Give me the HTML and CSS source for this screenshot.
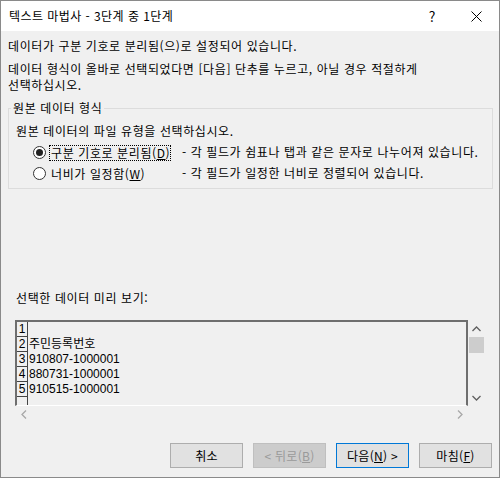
FILE: index.html
```html
<!DOCTYPE html>
<html lang="ko">
<head>
<meta charset="utf-8">
<title>텍스트 마법사</title>
<link rel="stylesheet" href="styles.css">
</head>
<body>
<div class="window">
  <div class="titlebar">
    <span class="title">텍스트 마법사 - 3단계 중 1단계</span>
    <span class="help">?</span>
    <svg class="close" width="11" height="11" viewBox="0 0 11 11"><path d="M0.5 0.5 L10.5 10.5 M10.5 0.5 L0.5 10.5" stroke="#000" stroke-width="1" fill="none"/></svg>
  </div>
  <div class="body">
    <p class="msg m1">데이터가 구분 기호로 분리됨(으)로 설정되어 있습니다.</p>
    <p class="msg m2">데이터 형식이 올바로 선택되었다면 [다음] 단추를 누르고, 아닐 경우 적절하게<br>선택하십시오.</p>
    <fieldset class="group">
      <legend>원본 데이터 형식</legend>
      <p class="msg">원본 데이터의 파일 유형을 선택하십시오.</p>
      <div class="opt">
        <span class="radio checked"></span>
        <span class="lblwrap"><span class="lbl focus">구분 기호로 분리됨(<u>D</u>)</span></span>
        <span class="desc">- 각 필드가 쉼표나 탭과 같은 문자로 나누어져 있습니다.</span>
      </div>
      <div class="opt">
        <span class="radio"></span>
        <span class="lblwrap"><span class="lbl">너비가 일정함(<u>W</u>)</span></span>
        <span class="desc">- 각 필드가 일정한 너비로 정렬되어 있습니다.</span>
      </div>
    </fieldset>
    <p class="msg preview-label">선택한 데이터 미리 보기:</p>
    <div class="preview">
      <div class="data">
        <div class="row"><span class="num">1</span><span class="cell"></span></div>
        <div class="row"><span class="num">2</span><span class="cell">주민등록번호</span></div>
        <div class="row"><span class="num">3</span><span class="cell">910807-1000001</span></div>
        <div class="row"><span class="num">4</span><span class="cell">880731-1000001</span></div>
        <div class="row"><span class="num">5</span><span class="cell">910515-1000001</span></div>
        <div class="row"><span class="num"></span><span class="cell"></span></div>
      </div>
      <div class="vscroll">
        <span class="arrow"><svg width="9" height="6" viewBox="0 0 9 6"><path d="M0.5 5 L4.5 1 L8.5 5" stroke="#606060" stroke-width="1.3" fill="none"/></svg></span>
        <span class="thumb"></span>
        <span class="track"></span>
        <span class="arrow"><svg width="9" height="6" viewBox="0 0 9 6"><path d="M0.5 1 L4.5 5 L8.5 1" stroke="#606060" stroke-width="1.3" fill="none"/></svg></span>
      </div>
      <div class="hscroll">
        <span class="arrow"><svg width="6" height="9" viewBox="0 0 6 9"><path d="M5 0.5 L1 4.5 L5 8.5" stroke="#a8a8a8" stroke-width="1.3" fill="none"/></svg></span>
        <span class="arrow"><svg width="6" height="9" viewBox="0 0 6 9"><path d="M1 0.5 L5 4.5 L1 8.5" stroke="#a8a8a8" stroke-width="1.3" fill="none"/></svg></span>
      </div>
    </div>
  </div>
  <div class="footer">
    <button class="btn">취소</button>
    <button class="btn disabled">&lt; 뒤로(<u>B</u>)</button>
    <button class="btn default">다음(<u>N</u>) &gt;</button>
    <button class="btn">마침(<u>F</u>)</button>
  </div>
</div>
</body>
</html>
```

FILE: styles.css
```css
body {
  margin: 0;
}

.window {
  width: 500px;
  height: 478px;
  box-sizing: border-box;
  border: 1px solid #8a8a8a;
  background: #f0f0f0;
  display: flex;
  flex-direction: column;
  font-family: "Noto Sans CJK KR", "Noto Sans", sans-serif;
  font-size: 12px;
  letter-spacing: 0.6px;
  color: #000;
}

.titlebar {
  flex: none;
  height: 30px;
  background: #fff;
  display: flex;
  align-items: center;
  padding: 0 17px 0 8px;
}

.title {
  flex: 1;
  line-height: 16px;
  letter-spacing: 0.45px;
}

.help {
  width: 12px;
  text-align: center;
  font-size: 14px;
  line-height: 16px;
  letter-spacing: 0;
  margin-right: 33px;
}

.close {
  display: block;
}

.body {
  padding: 0 6px 0 7px;
}

.msg {
  margin: 0;
  line-height: 16px;
}

.m1 {
  margin-top: 7px;
}

.m2 {
  margin-top: 7px;
}

.group {
  margin: 7px 0 0;
  padding: 7px 6px 7px 7px;
  border: 1px solid #dcdcdc;
  min-width: 0;
}

.group legend {
  padding: 0 2px;
  margin-left: -5px;
  line-height: 16px;
}

.opt {
  display: flex;
  align-items: center;
  height: 16px;
  margin-top: 5px;
  padding-left: 17px;
}

.radio {
  width: 13px;
  height: 13px;
  box-sizing: border-box;
  border: 1px solid #333;
  border-radius: 50%;
  background: #fff;
  display: flex;
  align-items: center;
  justify-content: center;
  flex: none;
}

.radio.checked::after {
  content: "";
  width: 7px;
  height: 7px;
  border-radius: 50%;
  background: #222;
}

.lblwrap {
  width: 133px;
  margin-left: 3px;
  flex: none;
}

.lbl {
  display: inline-block;
  line-height: 14px;
  padding: 0 0 0 1px;
  border: 1px solid transparent;
}

.lbl.focus {
  border: 1px dotted #000;
}

.desc {
  line-height: 16px;
  white-space: nowrap;
}

.preview-label {
  margin: 101px 0 0 8px;
}

.preview {
  margin: 14px 0 0 7px;
  width: 470px;
  display: grid;
  grid-template-columns: 453px 17px;
  grid-template-rows: 86px 17px;
}

.data {
  box-sizing: border-box;
  border-top: 2px solid #6e6e6e;
  border-left: 2px solid #6e6e6e;
  border-right: 2px solid #6e6e6e;
  border-bottom: 1px solid #fff;
  overflow: hidden;
  letter-spacing: 0;
}

.row {
  display: flex;
  height: 15px;
}

.num {
  width: 10px;
  height: 14px;
  flex: none;
  border-right: 1px solid #444;
  border-bottom: 1px solid #444;
  font-family: "Liberation Sans", sans-serif;
  font-size: 12px;
  line-height: 15px;
  text-align: center;
}

.cell {
  padding-left: 1px;
  font-family: "Liberation Sans", "Noto Sans CJK KR", sans-serif;
  font-size: 12px;
  line-height: 15px;
  white-space: nowrap;
}

.vscroll {
  display: flex;
  flex-direction: column;
}

.vscroll .arrow {
  height: 17px;
  display: flex;
  align-items: center;
  justify-content: center;
  flex: none;
}

.thumb {
  height: 16px;
  margin: 0 1px;
  background: #cdcdcd;
  flex: none;
}

.track {
  flex: 1;
}

.hscroll {
  display: flex;
  justify-content: space-between;
}

.hscroll .arrow {
  width: 17px;
  display: flex;
  align-items: center;
  justify-content: center;
}

.footer {
  margin-top: auto;
  display: flex;
  justify-content: flex-end;
  gap: 10px;
  padding: 0 7px 9px 0;
}

.btn {
  width: 73px;
  height: 25px;
  box-sizing: border-box;
  border: 1px solid #adadad;
  background: #e1e1e1;
  font-family: "Noto Sans CJK KR", "Noto Sans", sans-serif;
  font-size: 12px;
  letter-spacing: 0.3px;
  line-height: 16px;
  color: #000;
  padding: 0;
}

.btn.disabled {
  background: #cccccc;
  border-color: #bfbfbf;
  color: #9a9a9a;
}

.btn.default {
  border-color: #0078d7;
}
```
